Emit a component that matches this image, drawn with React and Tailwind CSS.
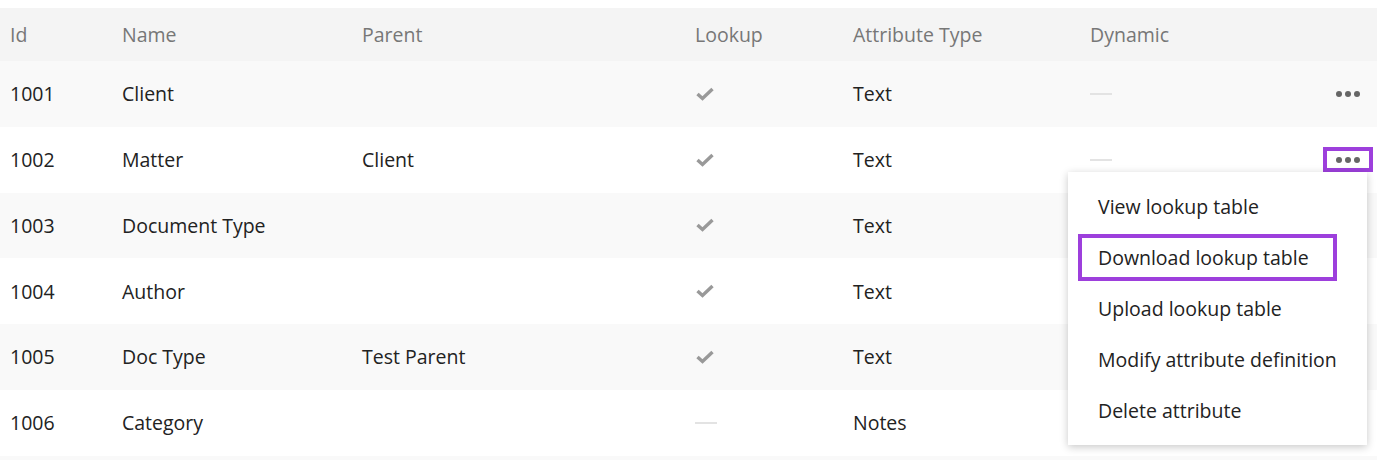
const rows = [
    { id: "1001", name: "Client", parent: "", lookup: true, type: "Text", menu: true },
    { id: "1002", name: "Matter", parent: "Client", lookup: true, type: "Text", menu: true, active: true },
    { id: "1003", name: "Document Type", parent: "", lookup: true, type: "Text" },
    { id: "1004", name: "Author", parent: "", lookup: true, type: "Text" },
    { id: "1005", name: "Doc Type", parent: "Test Parent", lookup: true, type: "Text" },
    { id: "1006", name: "Category", parent: "", lookup: false, type: "Notes" },
];

const menuItems = [
    "View lookup table",
    "Download lookup table",
    "Upload lookup table",
    "Modify attribute definition",
    "Delete attribute",
];

const cols = "grid grid-cols-[112px_240px_333px_158px_237px_1fr] items-center pl-[10px]";

function Check() {
    return (
        <svg width="18" height="14" viewBox="0 0 18 14" className="ml-[1px]">
            <path d="M1.5 7 L6.5 11.5 L16.5 2" fill="none" stroke="#999" strokeWidth="3.4" strokeLinejoin="miter" />
        </svg>
    );
}

function Dash() {
    return <div className="w-[22px] h-[2px] bg-[#e3e3e3]" />;
}

function Dots({ active }) {
    return (
        <div className={`w-[50px] h-[25px] flex items-center justify-center gap-[3px] ${active ? "border-[4px] border-[#9d3fdc]" : ""}`}>
            <span className="w-[6px] h-[6px] rounded-full bg-[#666]" />
            <span className="w-[6px] h-[6px] rounded-full bg-[#666]" />
            <span className="w-[6px] h-[6px] rounded-full bg-[#666]" />
        </div>
    );
}

export default function App() {
    return (
        <div className="w-[1377px] h-[460px] bg-white overflow-hidden text-[19.5px]" style={{ fontFamily: "'Open Sans', 'Noto Sans', sans-serif" }}>
            <div className="relative pt-[8px]">
                {/* Header */}
                <div className={`${cols} h-[53px] bg-[#f4f4f4] text-[#777]`}>
                    <div>Id</div>
                    <div>Name</div>
                    <div>Parent</div>
                    <div>Lookup</div>
                    <div>Attribute Type</div>
                    <div>Dynamic</div>
                </div>

                {/* Rows */}
                {rows.map((r, i) => (
                    <div key={r.id} className={`${cols} h-[65.8px] text-[#222] ${i % 2 === 0 ? "bg-[#f9f9f9]" : "bg-white"}`}>
                        <div>{r.id}</div>
                        <div>{r.name}</div>
                        <div>{r.parent}</div>
                        <div>{r.lookup ? <Check /> : <Dash />}</div>
                        <div>{r.type}</div>
                        <div className="flex items-center justify-between pr-[4px]">
                            {r.menu ? <><Dash /><Dots active={r.active} /></> : <span />}
                        </div>
                    </div>
                ))}
                <div className="h-[10px] bg-[#f9f9f9]" />

                {/* Dropdown menu */}
                <div className="absolute left-[1068px] top-[172px] w-[299px] bg-white shadow-[0_2px_8px_rgba(0,0,0,0.22)] py-[9px] text-[#222]">
                    {menuItems.map((item, i) => (
                        <div key={item} className="h-[51px] px-[10px] flex items-center">
                            <div className={`h-[47px] flex items-center pl-[16px] border-[4px] ${i === 1 ? "w-[259px] border-[#9d3fdc]" : "border-transparent"}`}>
                                {item}
                            </div>
                        </div>
                    ))}
                </div>
            </div>
        </div>
    );
}
